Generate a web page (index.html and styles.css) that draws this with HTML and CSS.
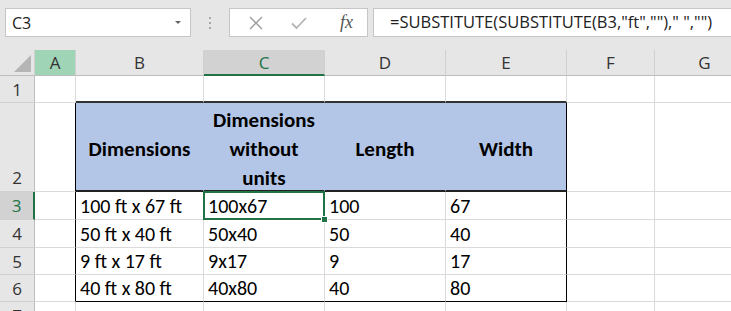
FILE: index.html
```html
<!DOCTYPE html>
<html lang="en">
<head>
  <meta charset="UTF-8">
  <title>Dimensions without units</title>
  <link rel="stylesheet" href="styles.css">
</head>
<body>

  <!-- Name box + formula bar -->
  <div class="toolbar">
    <div class="name-box">
      <span>C3</span>
      <span class="caret"></span>
    </div>
    <div class="grip"><i></i><i></i><i></i></div>
    <div class="fx-buttons">
      <svg class="fx-cancel" width="14" height="14" viewBox="0 0 14 14">
        <path d="M1 1 L13 13 M13 1 L1 13" stroke="#9a9a9a" stroke-width="1.3" fill="none"/>
      </svg>
      <svg class="fx-enter" width="16" height="14" viewBox="0 0 16 14">
        <path d="M1 7.5 L5.5 12 L15 2" stroke="#b4b4b4" stroke-width="1.8" fill="none"/>
      </svg>
      <span class="fx-label">fx</span>
    </div>
    <div class="formula">=SUBSTITUTE(SUBSTITUTE(B3,"ft",""),"&nbsp;","")</div>
  </div>

  <!-- Sheet grid -->
  <div class="sheet">
    <!-- column headers -->
    <div class="corner"><span class="corner-tri"></span></div>
    <div class="col-hdr hl">A</div>
    <div class="col-hdr">B</div>
    <div class="col-hdr sel">C</div>
    <div class="col-hdr">D</div>
    <div class="col-hdr">E</div>
    <div class="col-hdr">F</div>
    <div class="col-hdr">G</div>

    <!-- row 1 -->
    <div class="row-hdr">1</div>
    <div class="cell"></div>
    <div class="cell top-edge"></div>
    <div class="cell top-edge"></div>
    <div class="cell top-edge"></div>
    <div class="cell top-edge"></div>
    <div class="cell"></div>
    <div class="cell"></div>

    <!-- row 2 -->
    <div class="row-hdr bottom">2</div>
    <div class="cell left-edge"></div>
    <div class="cell head">Dimensions</div>
    <div class="cell head">Dimensions<br>without<br>units</div>
    <div class="cell head">Length</div>
    <div class="cell head right-edge">Width</div>
    <div class="cell"></div>
    <div class="cell"></div>

    <!-- row 3 -->
    <div class="row-hdr sel">3</div>
    <div class="cell left-edge"></div>
    <div class="cell">100 ft x 67 ft</div>
    <div class="cell active">100x67<span class="handle"></span></div>
    <div class="cell">100</div>
    <div class="cell right-edge">67</div>
    <div class="cell"></div>
    <div class="cell"></div>

    <!-- row 4 -->
    <div class="row-hdr">4</div>
    <div class="cell left-edge"></div>
    <div class="cell">50 ft x 40 ft</div>
    <div class="cell">50x40</div>
    <div class="cell">50</div>
    <div class="cell right-edge">40</div>
    <div class="cell"></div>
    <div class="cell"></div>

    <!-- row 5 -->
    <div class="row-hdr">5</div>
    <div class="cell left-edge"></div>
    <div class="cell">9 ft x 17 ft</div>
    <div class="cell">9x17</div>
    <div class="cell">9</div>
    <div class="cell right-edge">17</div>
    <div class="cell"></div>
    <div class="cell"></div>

    <!-- row 6 -->
    <div class="row-hdr">6</div>
    <div class="cell left-edge"></div>
    <div class="cell bottom-edge">40 ft x 80 ft</div>
    <div class="cell bottom-edge">40x80</div>
    <div class="cell bottom-edge">40</div>
    <div class="cell bottom-edge right-edge">80</div>
    <div class="cell"></div>
    <div class="cell"></div>

    <!-- row 7 -->
    <div class="row-hdr">7</div>
    <div class="cell"></div>
    <div class="cell"></div>
    <div class="cell"></div>
    <div class="cell"></div>
    <div class="cell"></div>
    <div class="cell"></div>
    <div class="cell"></div>
  </div>

</body>
</html>
```

FILE: styles.css
```css
body {
  margin: 0;
  background: #e6e6e6;
  font-family: "Open Sans", "Noto Sans", sans-serif;
  overflow: hidden;
}

/* formula bar */
.toolbar {
  height: 50px;
  display: flex;
  align-items: flex-start;
  padding: 8px 0 0 5px;
  box-sizing: border-box;
}
.name-box {
  width: 186px;
  height: 29px;
  background: white;
  border: 1px solid #c6c6c6;
  box-sizing: border-box;
  display: flex;
  align-items: center;
  justify-content: space-between;
  padding: 0 9px 0 6px;
  font-size: 16px;
  color: #222;
}
.caret {
  width: 0;
  height: 0;
  border-left: 3px solid transparent;
  border-right: 3px solid transparent;
  border-top: 3px solid #666;
}
.grip {
  width: 38px;
  height: 29px;
  display: flex;
  flex-direction: column;
  align-items: center;
  justify-content: center;
  gap: 3px;
}
.grip i {
  width: 2px;
  height: 2px;
  background: #a8a8a8;
}
.fx-buttons {
  width: 139px;
  height: 29px;
  background: white;
  border: 1px solid #c6c6c6;
  box-sizing: border-box;
  display: flex;
  align-items: center;
  padding-left: 19px;
}
.fx-enter {
  margin-left: 28px;
}
.fx-label {
  margin-left: 33px;
  font-family: "Liberation Serif", serif;
  font-style: italic;
  font-size: 18px;
  color: #555;
}
.formula {
  flex: 1;
  margin-left: 5px;
  height: 29px;
  background: white;
  border: 1px solid #c6c6c6;
  border-right: none;
  box-sizing: border-box;
  padding-left: 16px;
  font-size: 16.5px;
  line-height: 26px;
  color: #222;
  white-space: nowrap;
}

/* sheet */
.sheet {
  display: grid;
  grid-template-columns: 35px 41px 128px 121px 121px 121px 88px 100px;
  grid-template-rows: 26px 27px 89px 28px 28px 27px 27px 27px;
  background: white;
}
.corner, .col-hdr, .row-hdr {
  background: #e6e6e6;
  box-sizing: border-box;
  color: #333;
  font-size: 17px;
  display: flex;
  align-items: center;
  justify-content: center;
}
.corner {
  border-right: 1px solid #d0d0d0;
  border-bottom: 1px solid #bdbdbd;
  justify-content: flex-end;
  align-items: flex-end;
  padding: 0 3px 3px 0;
}
.corner-tri {
  width: 0;
  height: 0;
  border-left: 17px solid transparent;
  border-bottom: 17px solid #b5b5b5;
}
.col-hdr {
  border-right: 1px solid #d0d0d0;
  border-bottom: 1px solid #bdbdbd;
}
.col-hdr.hl {
  background: #9fd5b6;
}
.col-hdr.sel {
  background: #d2d2d2;
  border-bottom: 2px solid #217346;
  color: #217346;
}
.row-hdr {
  border-right: 1px solid #bdbdbd;
  border-bottom: 1px solid #d0d0d0;
}
.row-hdr.bottom {
  align-items: flex-end;
  padding-bottom: 2px;
}
.row-hdr.sel {
  background: #d2d2d2;
  border-right: 2px solid #217346;
  color: #217346;
}

.cell {
  position: relative;
  box-sizing: border-box;
  border-right: 1px solid #dadada;
  border-bottom: 1px solid #dadada;
  font-family: "Carlito", "Lato", sans-serif;
  font-size: 20px;
  color: #000;
  display: flex;
  align-items: flex-end;
  padding: 0 0 1px 4px;
  white-space: nowrap;
}
.cell.top-edge {
  border-bottom: 2px solid #333;
}
.cell.left-edge {
  border-right: 1px solid #000;
}
.cell.right-edge {
  border-right: 1px solid #000;
}
.cell.bottom-edge {
  border-bottom: 1px solid #000;
}
.cell.head {
  background: #b4c6e7;
  border-right-color: #b4c6e7;
  border-bottom: 2px solid #222;
  font-size: 21px;
  font-weight: bold;
  justify-content: center;
  align-items: center;
  text-align: center;
  line-height: 29px;
  padding: 5px 0 0 0;
}
.cell.head.right-edge {
  border-right-color: #000;
}

/* active cell */
.cell.active::after {
  content: "";
  position: absolute;
  left: -1px;
  top: -1px;
  right: -1px;
  bottom: -1px;
  border: 2px solid #217346;
}
.handle {
  position: absolute;
  right: -4px;
  bottom: -4px;
  width: 5px;
  height: 5px;
  background: #217346;
  border: 1px solid white;
  z-index: 1;
}
```
